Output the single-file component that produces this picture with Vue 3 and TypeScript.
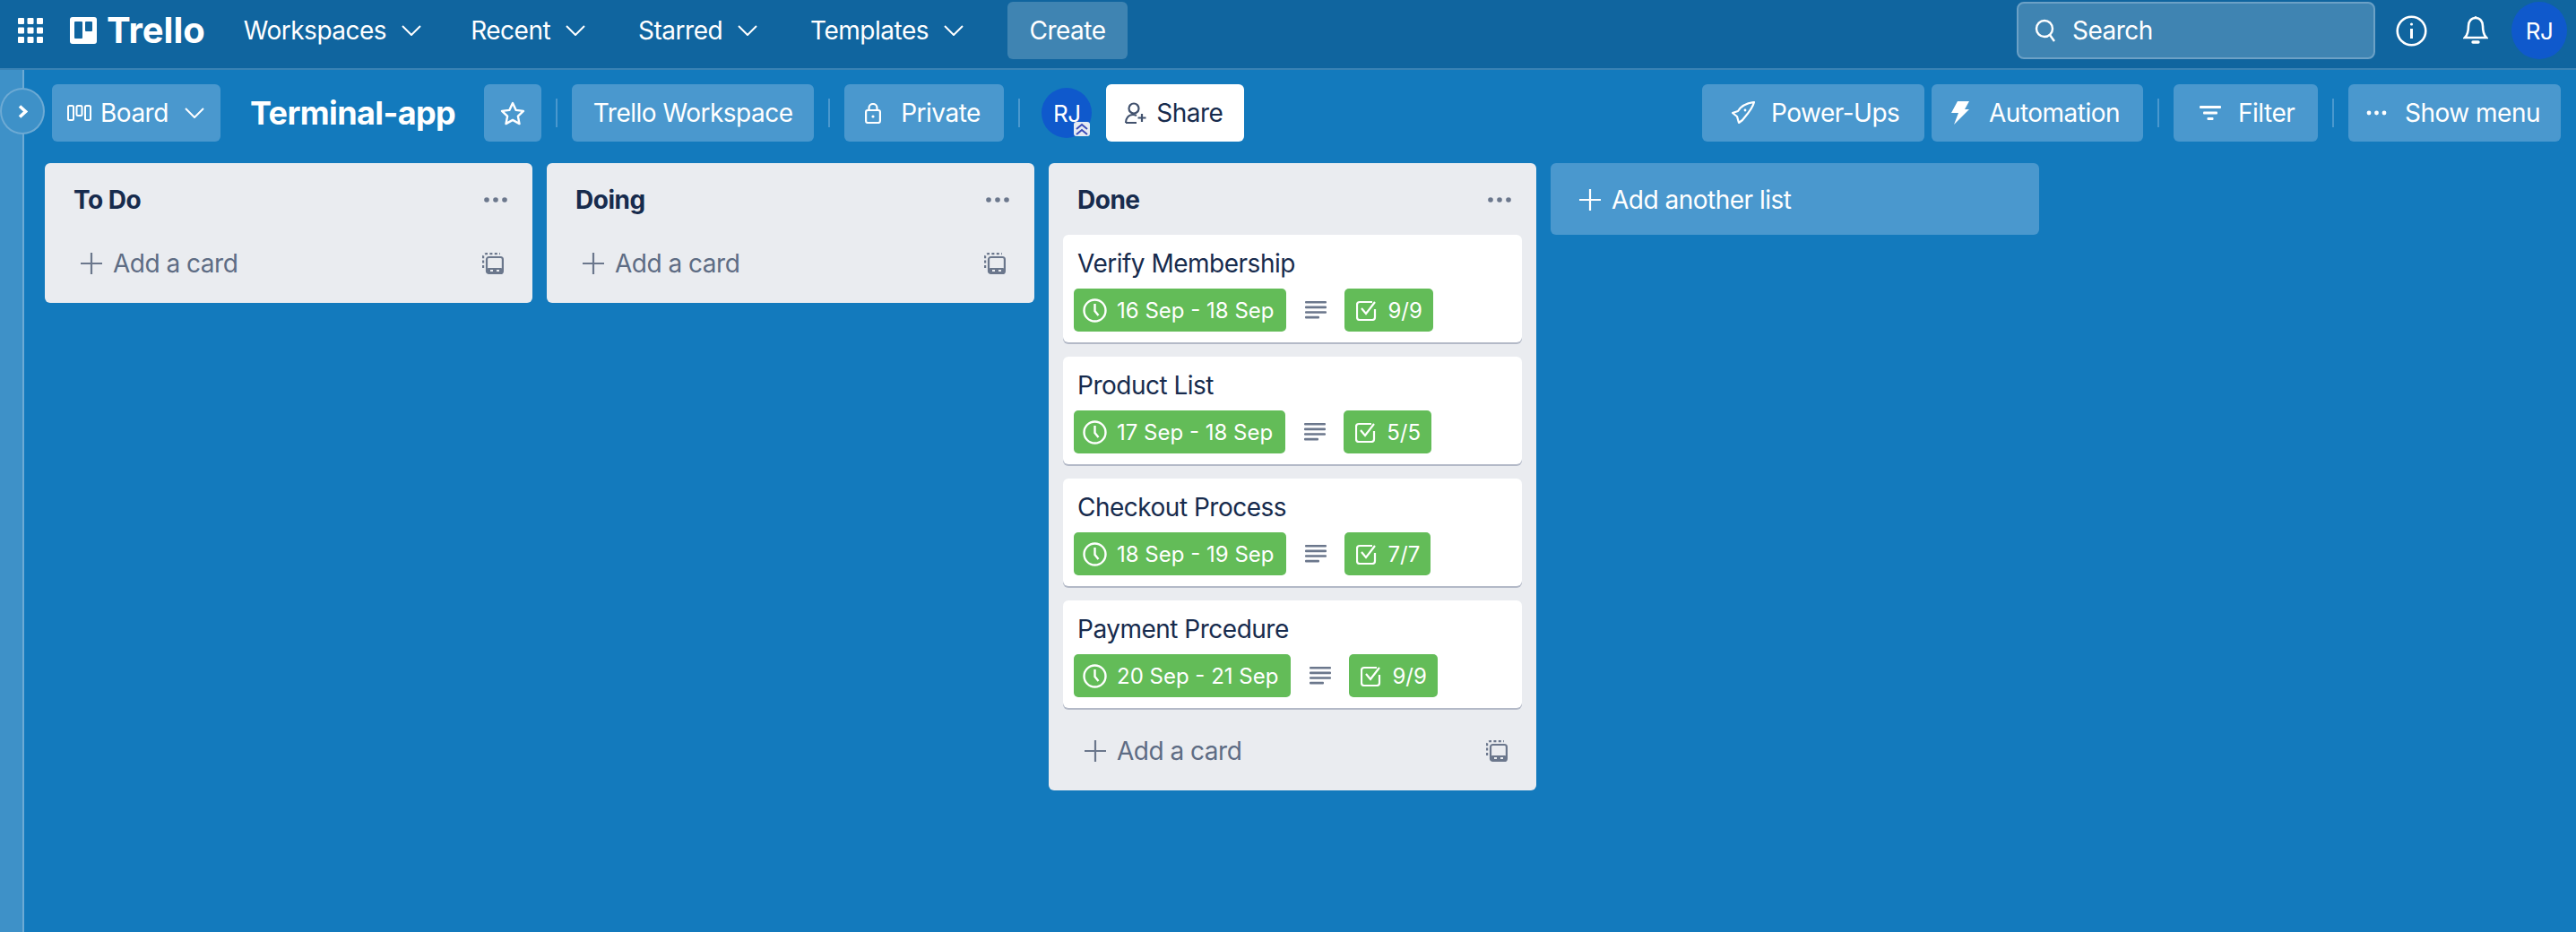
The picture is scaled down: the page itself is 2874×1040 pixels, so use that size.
<script setup lang="ts">
interface Card { title: string; dates: string; check: string }
const navItems: string[] = ['Workspaces', 'Recent', 'Starred', 'Templates']
const emptyLists: string[] = ['To Do', 'Doing']
const cards: Card[] = [
  { title: 'Verify Membership', dates: '16 Sep - 18 Sep', check: '9/9' },
  { title: 'Product List', dates: '17 Sep - 18 Sep', check: '5/5' },
  { title: 'Checkout Process', dates: '18 Sep - 19 Sep', check: '7/7' },
  { title: 'Payment Prcedure', dates: '20 Sep - 21 Sep', check: '9/9' },
]
</script>

<template>
  <div class="page">
    <header class="nav">
      <svg class="apps" width="28" height="28" viewBox="0 0 28 28" fill="#fff">
        <rect x="0" y="0" width="7" height="7" rx="1" /><rect x="10.5" y="0" width="7" height="7" rx="1" /><rect x="21" y="0" width="7" height="7" rx="1" />
        <rect x="0" y="10.5" width="7" height="7" rx="1" /><rect x="10.5" y="10.5" width="7" height="7" rx="1" /><rect x="21" y="10.5" width="7" height="7" rx="1" />
        <rect x="0" y="21" width="7" height="7" rx="1" /><rect x="10.5" y="21" width="7" height="7" rx="1" /><rect x="21" y="21" width="7" height="7" rx="1" />
      </svg>
      <div class="logo">
        <svg width="30" height="30" viewBox="0 0 30 30">
          <rect width="30" height="30" rx="3" fill="#fff" />
          <rect x="5" y="5" width="9" height="19" rx="1" fill="#10659f" />
          <rect x="17" y="5" width="8" height="11" rx="1" fill="#10659f" />
        </svg>
        <span class="logo-text">Trello</span>
      </div>
      <div v-for="item in navItems" :key="item" class="nav-item">
        <span>{{ item }}</span>
        <svg class="chev" width="22" height="12" viewBox="0 0 22 12" fill="none" stroke="#fff" stroke-width="2"><path d="M1 1l10 10L21 1" /></svg>
      </div>
      <div class="create">Create</div>
      <div class="nav-right">
        <div class="search">
          <svg width="24" height="26" viewBox="0 0 24 26" fill="none" stroke="#fff" stroke-width="2.4"><circle cx="11" cy="11" r="9" /><path d="M17 18l5 7" /></svg>
          <span>Search</span>
        </div>
        <svg class="info" width="35" height="35" viewBox="0 0 35 35" fill="none" stroke="#fff" stroke-width="2.6"><circle cx="17.5" cy="17.5" r="15.8" /><path d="M17.5 15v11" stroke-width="3" /><circle cx="17.5" cy="10" r="1.6" fill="#fff" stroke="none" /></svg>
        <svg class="bell" width="28" height="34" viewBox="0 0 28 34" fill="none" stroke="#fff" stroke-width="2.6"><path d="M14 3c-5 0-8 4-8 9 0 7-1 10-4 13h24c-3-3-4-6-4-13 0-5-3-9-8-9z" /><circle cx="14" cy="2.5" r="1.5" fill="#fff" stroke="none" /><path d="M11 30h6" stroke-width="3.4" stroke-linecap="round" /></svg>
        <div class="me">RJ</div>
      </div>
    </header>

    <div class="body">
      <aside class="strip">
        <div class="strip-toggle">
          <svg width="11" height="15" viewBox="0 0 11 15" fill="none" stroke="#fff" stroke-width="3.6"><path d="M2 1.5l6.5 6-6.5 6" /></svg>
        </div>
      </aside>
      <main class="main">
        <div class="bar">
          <div class="btn board-btn">
            <svg width="27" height="18" viewBox="0 0 27 18" fill="none" stroke="#fff" stroke-width="2"><rect x="1" y="1" width="6" height="16" rx="1.5" /><rect x="10.5" y="1" width="6" height="11" rx="1.5" /><rect x="20" y="1" width="6" height="16" rx="1.5" /></svg>
            <span>Board</span>
            <svg class="chev" width="22" height="12" viewBox="0 0 22 12" fill="none" stroke="#fff" stroke-width="2"><path d="M1 1l10 10L21 1" /></svg>
          </div>
          <h1 class="title">Terminal-app</h1>
          <div class="btn star-btn">
            <svg width="28" height="27" viewBox="0 0 28 27" fill="none" stroke="#fff" stroke-width="2.4" stroke-linejoin="round"><path d="M14 2l3.7 7.9 8.3 1-6.1 5.8 1.6 8.4L14 20.9l-7.5 4.2 1.6-8.4L2 10.9l8.3-1z" /></svg>
          </div>
          <i class="sep" />
          <div class="btn ws-btn">Trello Workspace</div>
          <i class="sep" />
          <div class="btn priv-btn">
            <svg width="18" height="23" viewBox="0 0 18 23" fill="none" stroke="#fff" stroke-width="2.2"><rect x="1.1" y="8" width="15.8" height="14" rx="2" /><path d="M4.5 8V5.5a4.5 4.5 0 0 1 9 0V8" /><circle cx="9" cy="15" r="1.6" fill="#fff" stroke="none" /></svg>
            <span>Private</span>
          </div>
          <i class="sep sep-last" />
          <div class="avatar">
            RJ
            <span class="avatar-badge">
              <svg width="18" height="16" viewBox="0 0 18 16" fill="none" stroke="#3b4cb8" stroke-width="2"><path d="M3 8l6-5 6 5M3 14l6-5 6 5" /></svg>
            </span>
          </div>
          <div class="btn share-btn">
            <svg width="26" height="24" viewBox="0 0 26 24" fill="none" stroke="#42526e" stroke-width="2.2"><circle cx="11" cy="7" r="5.5" /><path d="M2 23c0-5 3-9 8-9 2 0 3 .5 4 1M2 23h12M20 13v9M15.5 17.5h9" /></svg>
            <span>Share</span>
          </div>
          <div class="bar-right">
            <div class="btn power-btn">
              <svg width="26" height="26" viewBox="0 0 26 26" fill="none" stroke="#fff" stroke-width="2.2" stroke-linejoin="round"><path d="M25 1C17 2 10 6 7 11l-6 2 5 4 2 7 4-3c4-5 11-12 13-20z" /><circle cx="15" cy="10" r="1.4" fill="#fff" stroke="none" /></svg>
              <span>Power-Ups</span>
            </div>
            <div class="btn auto-btn">
              <svg width="20" height="26" viewBox="0 0 20 26" fill="#fff"><path d="M7 0h13l-5 9h5L3 26l5-13H0z" /></svg>
              <span>Automation</span>
            </div>
            <i class="sep" />
            <div class="btn filter-btn">
              <svg width="24" height="16" viewBox="0 0 24 16" fill="#fff"><rect width="24" height="3" rx="1" /><rect x="4" y="6.5" width="16" height="3" rx="1" /><rect x="8.5" y="13" width="7" height="3" rx="1" /></svg>
              <span>Filter</span>
            </div>
            <i class="sep" />
            <div class="btn menu-btn">
              <svg width="23" height="6" viewBox="0 0 23 6" fill="#fff"><circle cx="3" cy="3" r="2.4" /><circle cx="11.5" cy="3" r="2.4" /><circle cx="20" cy="3" r="2.4" /></svg>
              <span>Show menu</span>
            </div>
          </div>
        </div>

        <div class="lists">
          <section v-for="name in emptyLists" :key="name" class="list">
            <div class="list-head">
              <span>{{ name }}</span>
              <svg width="26" height="6" viewBox="0 0 26 6" fill="#6b778c"><circle cx="3" cy="3" r="2.8" /><circle cx="13" cy="3" r="2.8" /><circle cx="23" cy="3" r="2.8" /></svg>
            </div>
            <div class="list-foot">
              <svg width="24" height="24" viewBox="0 0 24 24" stroke="#6b778c" stroke-width="2.2"><path d="M12 0v24M0 12h24" /></svg>
              <span>Add a card</span>
              <svg class="tpl" width="24" height="24" viewBox="0 0 24 24" fill="none" stroke="#6b778c" stroke-width="2.2"><path d="M1.1 17V4.5a3.4 3.4 0 0 1 3.4-3.4H20" stroke-dasharray="3 2.4" /><rect x="5" y="5" width="17.9" height="17.9" rx="2.5" /><rect x="5" y="17" width="17.9" height="6" rx="2" fill="#6b778c" stroke="none" /><path d="M9 20h3M16 20h3" stroke="#eaecf0" stroke-width="1.8" /></svg>
            </div>
          </section>

          <section class="list">
            <div class="list-head">
              <span>Done</span>
              <svg width="26" height="6" viewBox="0 0 26 6" fill="#6b778c"><circle cx="3" cy="3" r="2.8" /><circle cx="13" cy="3" r="2.8" /><circle cx="23" cy="3" r="2.8" /></svg>
            </div>
            <article v-for="card in cards" :key="card.title" class="card">
              <div class="card-title">{{ card.title }}</div>
              <div class="badges">
                <div class="badge">
                  <svg width="27" height="27" viewBox="0 0 27 27" fill="none" stroke="#fff" stroke-width="2.4"><circle cx="13.5" cy="13.5" r="12" /><path d="M13.5 6v8l4 5" /></svg>
                  <span>{{ card.dates }}</span>
                </div>
                <svg class="desc" width="24" height="20" viewBox="0 0 24 20" fill="#6b778c"><rect width="24" height="2.6" rx="1" /><rect y="5.6" width="24" height="2.6" rx="1" /><rect y="11.2" width="24" height="2.6" rx="1" /><rect y="16.8" width="16" height="2.6" rx="1" /></svg>
                <div class="badge check">
                  <svg width="23" height="23" viewBox="0 0 23 23" fill="none" stroke="#fff" stroke-width="2.2"><path d="M21 10v9a3 3 0 0 1-3 3H4a3 3 0 0 1-3-3V5a3 3 0 0 1 3-3h14" /><path d="M6 9l5 6 10-13" /></svg>
                  <span>{{ card.check }}</span>
                </div>
              </div>
            </article>
            <div class="list-foot">
              <svg width="24" height="24" viewBox="0 0 24 24" stroke="#6b778c" stroke-width="2.2"><path d="M12 0v24M0 12h24" /></svg>
              <span>Add a card</span>
              <svg class="tpl" width="24" height="24" viewBox="0 0 24 24" fill="none" stroke="#6b778c" stroke-width="2.2"><path d="M1.1 17V4.5a3.4 3.4 0 0 1 3.4-3.4H20" stroke-dasharray="3 2.4" /><rect x="5" y="5" width="17.9" height="17.9" rx="2.5" /><rect x="5" y="17" width="17.9" height="6" rx="2" fill="#6b778c" stroke="none" /><path d="M9 20h3M16 20h3" stroke="#eaecf0" stroke-width="1.8" /></svg>
            </div>
          </section>

          <div class="add-list">
            <svg width="24" height="24" viewBox="0 0 24 24" stroke="#fff" stroke-width="2.2"><path d="M12 0v24M0 12h24" /></svg>
            <span>Add another list</span>
          </div>
        </div>
      </main>
    </div>
  </div>
</template>

<style scoped>
.page {
  width: 2874px;
  height: 1040px;
  display: flex;
  flex-direction: column;
  overflow: hidden;
  background: #137abd;
  font-family: Inter, "Liberation Sans", sans-serif;
  font-size: 28px;
  letter-spacing: -0.5px;
  color: #fff;
}
.nav {
  height: 76px;
  flex: none;
  box-sizing: content-box;
  background: #10659f;
  border-bottom: 2px solid #3a82b4;
  display: flex;
  align-items: center;
  padding-left: 20px;
}
.nav > * { margin-top: -8px; }
.apps { margin-right: 30px; }
.logo {
  display: flex;
  align-items: center;
  gap: 11px;
  margin-right: 43px;
}
.logo-text {
  font-size: 40px;
  font-weight: 700;
  line-height: 1;
  letter-spacing: 0;
}
.nav-item {
  display: flex;
  align-items: center;
  gap: 17px;
  margin-right: 59px;
}
.nav-item:nth-of-type(2) { margin-right: 55px; }
.nav-item:nth-of-type(5) { margin-right: 49px; }
.create {
  width: 134px;
  height: 64px;
  background: #3f84b2;
  border-radius: 6px;
  display: flex;
  align-items: center;
  justify-content: center;
}
.nav-right {
  margin-left: auto;
  display: flex;
  align-items: center;
  padding-right: 10px;
}
.search {
  width: 400px;
  height: 64px;
  box-sizing: border-box;
  background: #3f84b2;
  border: 2px solid #6ca1c6;
  border-radius: 8px;
  display: flex;
  align-items: center;
  gap: 18px;
  padding-left: 18px;
  margin-right: 23px;
}
.info { margin-right: 40px; }
.bell { margin-right: 26px; }
.me {
  width: 62px;
  height: 64px;
  border-radius: 50%;
  background: #0f59cc;
  display: flex;
  align-items: center;
  justify-content: center;
  font-size: 26px;
}
.body {
  flex: 1;
  display: flex;
  min-height: 0;
}
.strip {
  width: 25px;
  flex: none;
  background: #3e91c8;
  border-right: 2px solid #6daad4;
  position: relative;
}
.strip-toggle {
  position: absolute;
  left: 0;
  top: 20px;
  width: 50px;
  height: 52px;
  box-sizing: border-box;
  border-radius: 50%;
  background: #3e91c8;
  border: 2px solid #6daad4;
  display: flex;
  align-items: center;
  justify-content: center;
}
.main {
  flex: 1;
  min-width: 0;
  display: flex;
  flex-direction: column;
}
.bar {
  display: flex;
  align-items: center;
  height: 64px;
  margin-top: 16px;
  padding: 0 17px 0 31px;
}
.bar-right {
  margin-left: auto;
  display: flex;
  align-items: center;
}
.btn {
  height: 64px;
  box-sizing: border-box;
  border-radius: 6px;
  background: #4a98ce;
  display: flex;
  align-items: center;
}
.board-btn { width: 188px; padding-left: 17px; gap: 10px; margin-right: 33px; }
.board-btn .chev { margin-left: 8px; }
.title {
  margin: 0 32px 0 0;
  font-size: 36px;
  font-weight: 700;
  line-height: 1;
  letter-spacing: -0.6px;
}
.star-btn { width: 64px; justify-content: center; }
.sep {
  width: 2px;
  height: 32px;
  background: #4a98ce;
  margin: 0 16px 0 16px;
  flex: none;
}
.sep-last { margin-right: 24px; }
.ws-btn { width: 270px; justify-content: center; }
.priv-btn { width: 178px; padding-left: 23px; gap: 22px; }
.avatar {
  width: 56px;
  height: 56px;
  border-radius: 50%;
  background: #0f59cc;
  display: flex;
  align-items: center;
  justify-content: center;
  font-size: 26px;
  margin-right: 16px;
  position: relative;
}
.avatar-badge {
  position: absolute;
  right: 2px;
  bottom: 2px;
  width: 18px;
  height: 16px;
  background: #e6eaf2;
  border-radius: 3px;
  display: flex;
}
.share-btn { width: 154px; background: #fff; color: #172b4d; padding-left: 20px; gap: 10px; }
.power-btn { width: 248px; padding-left: 33px; gap: 18px; margin-right: 8px; }
.auto-btn { width: 236px; padding-left: 22px; gap: 22px; }
.filter-btn { width: 161px; padding-left: 29px; gap: 19px; }
.menu-btn { width: 237px; padding-left: 20px; gap: 20px; }
.lists {
  display: flex;
  align-items: flex-start;
  gap: 16px;
  margin-top: 24px;
  padding-left: 23px;
}
.list {
  width: 544px;
  flex: none;
  box-sizing: border-box;
  background: #eaecf0;
  border-radius: 6px;
  padding: 0 16px 22px;
}
.list-head {
  height: 80px;
  box-sizing: border-box;
  padding: 2px 12px 0 16px;
  display: flex;
  align-items: center;
  justify-content: space-between;
  color: #172b4d;
  font-weight: 700;
}
.list-foot {
  height: 44px;
  margin-top: 10px;
  display: flex;
  align-items: center;
  gap: 12px;
  padding: 0 16px 0 24px;
  color: #5e6c84;
}
.card + .list-foot { margin-top: 26px; }
.tpl { margin-left: auto; }
.card {
  height: 120px;
  box-sizing: border-box;
  background: #fff;
  border-radius: 6px;
  box-shadow: 0 2px 0 #b3b9c7;
  margin-bottom: 16px;
  padding: 11px 12px 0;
  color: #172b4d;
}
.card-title {
  height: 42px;
  line-height: 42px;
  padding-left: 4px;
}
.badges {
  display: flex;
  align-items: center;
  margin-top: 7px;
}
.badge {
  height: 48px;
  box-sizing: border-box;
  display: flex;
  align-items: center;
  gap: 11px;
  padding: 0 14px 0 10px;
  background: #63bc58;
  border-radius: 5px;
  color: #fff;
  font-size: 24px;
  letter-spacing: 0;
}
.desc { margin: 0 20px 0 21px; }
.check { padding-left: 13px; gap: 12px; padding-right: 12px; }
.add-list {
  width: 545px;
  height: 80px;
  box-sizing: border-box;
  padding: 2px 0 0 32px;
  border-radius: 6px;
  background: #4a98ce;
  display: flex;
  align-items: center;
  gap: 12px;
}
</style>
